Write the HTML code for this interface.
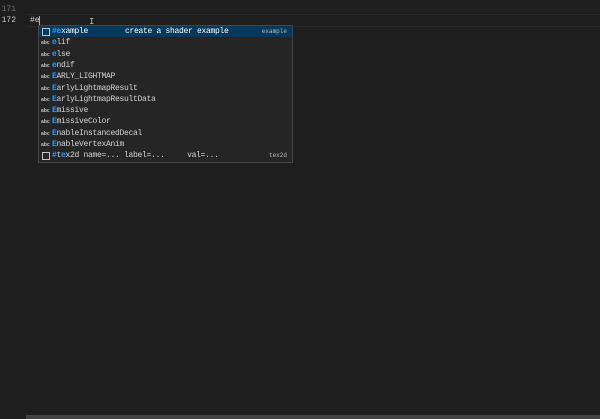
<!DOCTYPE html>
<html><head><style>
body{margin:0;width:600px;height:419px;background:#1e1e1e;overflow:hidden;position:relative;font-family:"Liberation Mono",monospace;}
.ln{position:absolute;left:0;width:16px;text-align:right;font-size:8px;color:#858585;}
.cur{position:absolute;left:26px;right:0;top:14px;height:11px;border-top:1px solid #282828;border-bottom:1px solid #282828;}
.w{position:absolute;left:38px;top:25px;width:253px;height:136px;background:#252526;border:1px solid #454545;}
.r{position:absolute;left:0;right:0;height:11.3px;font-size:8px;letter-spacing:-0.3px;line-height:12.5px;color:#d4d4d4;white-space:pre;}
.r.s{background:#04395e;color:#fff;line-height:12.5px;}
.ic{position:absolute;left:2px;font-size:5px;color:#c5c5c5;font-family:"Liberation Sans",sans-serif;letter-spacing:0;font-weight:bold;}
.bx{position:absolute;left:3px;top:2px;width:6px;height:6px;border:1px solid #c5c5c5;}
.t{position:absolute;left:13px;}
.h{color:#18a3ff;font-weight:bold;}
.d{position:absolute;left:86px;}
.k{position:absolute;right:5px;font-size:6px;color:#bbb;letter-spacing:0;}
</style></head><body>
<div class="ln" style="top:5px;color:#6e6e6e">171</div>
<div class="cur"></div>
<div class="ln" style="top:16px;color:#c6c6c6">172</div>
<div style="position:absolute;left:30px;top:15px;font-size:8px;color:#d4d4d4;line-height:11px">#e</div>
<div style="position:absolute;left:39px;top:16px;width:1px;height:9px;background:#aeafad"></div>
<div style="position:absolute;left:89px;top:18px;font-size:9px;color:#bbb;line-height:9px">I</div>
<div class="w">
<div class="r s" style="top:0"><span class="bx"></span><span class="t"><span class="h">#e</span>xample</span><span class="d">create a shader example</span><span class="k">example</span></div>
<div class="r" style="top:11.3px"><span class="ic">abc</span><span class="t"><span class="h">e</span>lif</span></div>
<div class="r" style="top:22.6px"><span class="ic">abc</span><span class="t"><span class="h">e</span>lse</span></div>
<div class="r" style="top:33.9px"><span class="ic">abc</span><span class="t"><span class="h">e</span>ndif</span></div>
<div class="r" style="top:45.2px"><span class="ic">abc</span><span class="t"><span class="h">E</span>ARLY_LIGHTMAP</span></div>
<div class="r" style="top:56.5px"><span class="ic">abc</span><span class="t"><span class="h">E</span>arlyLightmapResult</span></div>
<div class="r" style="top:67.8px"><span class="ic">abc</span><span class="t"><span class="h">E</span>arlyLightmapResultData</span></div>
<div class="r" style="top:79.1px"><span class="ic">abc</span><span class="t"><span class="h">E</span>missive</span></div>
<div class="r" style="top:90.4px"><span class="ic">abc</span><span class="t"><span class="h">E</span>missiveColor</span></div>
<div class="r" style="top:101.7px"><span class="ic">abc</span><span class="t"><span class="h">E</span>nableInstancedDecal</span></div>
<div class="r" style="top:113px"><span class="ic">abc</span><span class="t"><span class="h">E</span>nableVertexAnim</span></div>
<div class="r" style="top:124.3px"><span class="bx"></span><span class="t"><span class="h">#</span>t<span class="h">e</span>x2d name=... label=...     val=...</span><span class="k">tex2d</span></div>
</div>
<div style="position:absolute;left:26px;right:0;top:415px;height:4px;background:#424242"></div>
</body></html>
